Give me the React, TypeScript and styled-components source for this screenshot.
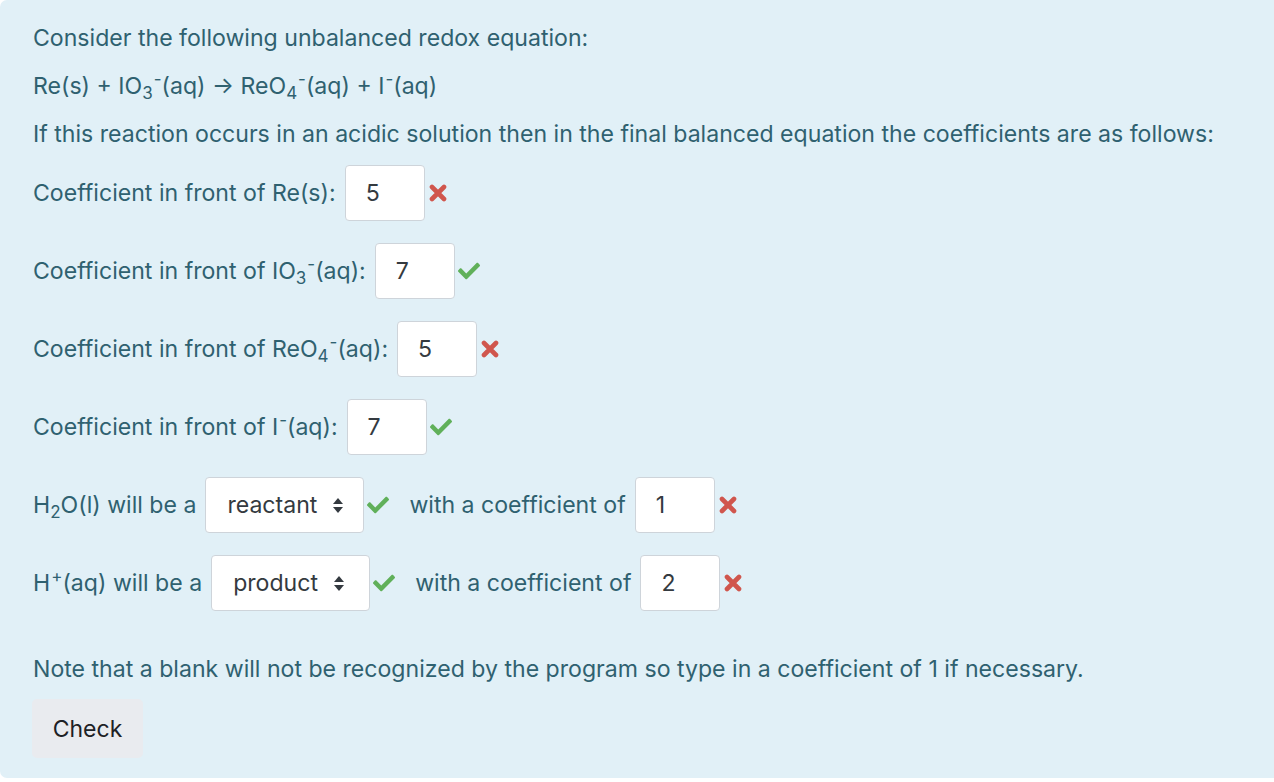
import styled, { createGlobalStyle } from "styled-components";
import { FaCheck } from "react-icons/fa";

const GlobalStyle = createGlobalStyle`
  body {
    margin: 0;
    background: #ffffff;
    font-family: Inter, "Noto Sans", "Liberation Sans", sans-serif;
  }
`;

type Mark = "right" | "wrong";

const CrossIcon = () => (
  <svg width="18" height="18" viewBox="0 0 18 18">
    <path
      d="M3 3 L15 15 M15 3 L3 15"
      stroke="currentColor"
      strokeWidth="4.6"
      strokeLinecap="round"
    />
  </svg>
);

const Result = ({ mark }: { mark: Mark }) =>
  mark === "right" ? (
    <Tick>
      <FaCheck size={22} />
    </Tick>
  ) : (
    <Cross>
      <CrossIcon />
    </Cross>
  );

const SortArrows = () => (
  <svg width="10" height="15" viewBox="0 0 10 15">
    <path d="M5 0 L10 6 L0 6 Z" fill="#343a40" />
    <path d="M5 15 L10 9 L0 9 Z" fill="#343a40" />
  </svg>
);

const CoeffRow = ({
  label,
  value,
  mark,
}: {
  label: React.ReactNode;
  value: string;
  mark: Mark;
}) => (
  <Row>
    <Label>{label}:</Label>
    <NumberBox>{value}</NumberBox>
    <Result mark={mark} />
  </Row>
);

const RoleRow = ({
  species,
  role,
  value,
  valueMark,
}: {
  species: React.ReactNode;
  role: string;
  value: string;
  valueMark: Mark;
}) => (
  <Row>
    <Label>{species} will be a</Label>
    <Select>
      <span>{role}</span>
      <SortArrows />
    </Select>
    <Result mark="right" />
    <Label $gapLeft={20}>with a coefficient of</Label>
    <NumberBox>{value}</NumberBox>
    <Result mark={valueMark} />
  </Row>
);

export default function App() {
  return (
    <>
      <GlobalStyle />
      <Panel>
        <Para>Consider the following unbalanced redox equation:</Para>
        <Para>
          Re(s) + IO<sub>3</sub>
          <sup>-</sup>(aq) → ReO<sub>4</sub>
          <sup>-</sup>(aq) + I<sup>-</sup>(aq)
        </Para>
        <Para>
          If this reaction occurs in an acidic solution then in the final
          balanced equation the coefficients are as follows:
        </Para>
        <Rows>
          <CoeffRow label="Coefficient in front of Re(s)" value="5" mark="wrong" />
          <CoeffRow
            label={
              <>
                Coefficient in front of IO<sub>3</sub>
                <sup>-</sup>(aq)
              </>
            }
            value="7"
            mark="right"
          />
          <CoeffRow
            label={
              <>
                Coefficient in front of ReO<sub>4</sub>
                <sup>-</sup>(aq)
              </>
            }
            value="5"
            mark="wrong"
          />
          <CoeffRow
            label={
              <>
                Coefficient in front of I<sup>-</sup>(aq)
              </>
            }
            value="7"
            mark="right"
          />
          <RoleRow
            species={
              <>
                H<sub>2</sub>O(l)
              </>
            }
            role="reactant"
            value="1"
            valueMark="wrong"
          />
          <RoleRow
            species={
              <>
                H<sup>+</sup>(aq)
              </>
            }
            role="product"
            value="2"
            valueMark="wrong"
          />
        </Rows>
        <Note>
          Note that a blank will not be recognized by the program so type in a
          coefficient of 1 if necessary.
        </Note>
        <CheckButton>Check</CheckButton>
      </Panel>
    </>
  );
}

const Panel = styled.div`
  background: #e1f0f7;
  color: #2f6170;
  border-radius: 7px 0 0 7px;
  padding: 23px 33px 19px 33px;
  font-size: 23.1px;
  line-height: 30px;
  height: 778px;
  box-sizing: border-box;

  sub,
  sup {
    font-size: 17px;
    line-height: 0;
    position: relative;
    vertical-align: baseline;
  }
  sub {
    bottom: -5px;
  }
  sup {
    top: -9px;
    margin-left: 1px;
  }
`;

const Para = styled.p`
  margin: 0 0 18px 0;
`;

const Rows = styled.div`
  display: flex;
  flex-direction: column;
  gap: 22px;
  margin-top: -2px;
`;

const Row = styled.div`
  display: flex;
  align-items: center;
  height: 56px;
`;

const Label = styled.span<{ $gapLeft?: number }>`
  margin-left: ${(p) => p.$gapLeft ?? 0}px;
  margin-right: 9px;
  white-space: nowrap;
`;

const NumberBox = styled.div`
  box-sizing: border-box;
  width: 80px;
  height: 56px;
  padding-left: 20px;
  display: flex;
  align-items: center;
  background: #ffffff;
  border: 1px solid #ced4da;
  border-radius: 4px;
  color: #343a40;
`;

const Select = styled.div`
  box-sizing: border-box;
  width: 159px;
  height: 56px;
  padding-left: 21px;
  display: flex;
  align-items: center;
  gap: 16px;
  background: #ffffff;
  border: 1px solid #ced4da;
  border-radius: 4px;
  color: #343a40;
`;

const Tick = styled.span`
  display: inline-flex;
  color: #60b05a;
  margin-left: 3px;
`;

const Cross = styled.span`
  display: inline-flex;
  color: #d0564d;
  margin-left: 4px;
`;

const Note = styled.p`
  margin: 43px 0 15px 0;
`;

const CheckButton = styled.button`
  box-sizing: border-box;
  width: 111px;
  height: 59px;
  border: none;
  border-radius: 5px;
  background: #e9ebef;
  color: #1d2125;
  font-family: inherit;
  font-size: 23px;
  margin-left: -1px;
`;
